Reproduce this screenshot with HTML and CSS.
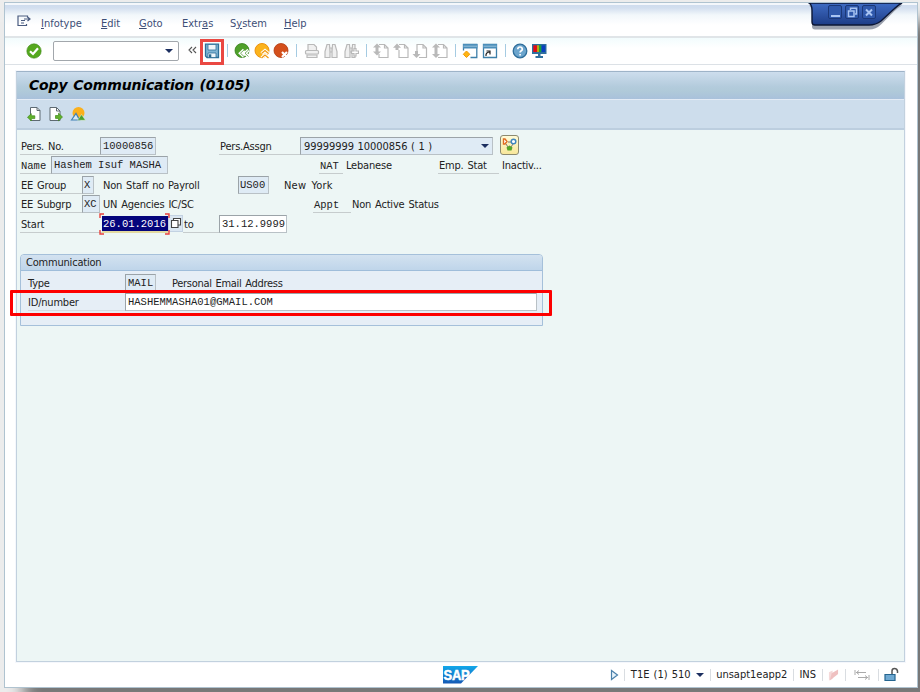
FILE: index.html
```
<!DOCTYPE html>
<html lang="en">
<head>
  <meta charset="UTF-8">
  <meta name="viewport" content="width=device-width, initial-scale=1.0">
  <title>Copy Communication (0105)</title>
  <link rel="stylesheet" href="styles.css">
</head>
<body>
  <div class="window">

    <!-- Window buttons -->
    <svg class="window-buttons" width="96" height="28" viewBox="0 0 96 28">
      <defs>
        <linearGradient id="tab" x1="0" y1="0" x2="0" y2="1">
          <stop offset="0" stop-color="#3f6cc4"/>
          <stop offset="1" stop-color="#1d3c86"/>
        </linearGradient>
      </defs>
      <path d="M2 1Q5 3 5 8V22Q5 25 8 25H62Q69 25 74 20L87 7Q91 3 95 1" fill="#9aa0ac" transform="translate(0 1.5)"/>
      <path d="M2 0Q5 2 5 7V19Q5 22 8 22H62Q69 22 74 18L87 6Q91 2 95 0Z" fill="url(#tab)" stroke="#0c1736" stroke-width="1.4"/>
      <g fill="#2f58ab" stroke="#1b3878">
        <rect x="21.500" y="2.500" width="13" height="13" rx="1.500"/>
        <rect x="38.500" y="2.500" width="13" height="13" rx="1.500"/>
        <rect x="55.500" y="2.500" width="13" height="13" rx="1.500"/>
      </g>
      <g fill="none" stroke="#a9c4f2" stroke-width="1.500">
        <path d="M24 13H33" stroke-width="2"/>
        <path d="M43.500 7V5.300H49.500V11H48"/>
        <path d="M41.500 8H47V13.500H41.500Z"/>
        <path d="M59 6.500L65 12.500M65 6.500L59 12.500" stroke-width="2"/>
      </g>
    </svg>

    <!-- Menu bar -->
    <div class="menu-bar">
      <svg class="menu-icon" width="14" height="12" viewBox="0 0 14 12" fill="none" stroke="#4a5c80" stroke-width="1.200">
        <path d="M10.500 2.500V1H1V10.500H9.500V9"/>
        <path d="M4 5.500H8M4 8H7"/>
        <path d="M7 4H13M10.500 2L13 4L10.500 6"/>
      </svg>
      <span class="menu-item"><u>I</u>nfotype</span>
      <span class="menu-item"><u>E</u>dit</span>
      <span class="menu-item"><u>G</u>oto</span>
      <span class="menu-item">Extr<u>a</u>s</span>
      <span class="menu-item">S<u>y</u>stem</span>
      <span class="menu-item"><u>H</u>elp</span>
    </div>

    <!-- Standard toolbar -->
    <div class="toolbar">
      <svg class="icon" viewBox="0 0 16 16">
        <circle cx="8" cy="8" r="7.200" fill="#55a81e" stroke="#3f8a1a" stroke-width=".6"/>
        <path d="M4 8.200L7 11L12 5.300" fill="none" stroke="#fff" stroke-width="2.200"/>
      </svg>
      <div class="command"><span class="arrow"></span></div>
      <svg class="collapse" viewBox="0 0 10 16" fill="none" stroke="#555" stroke-width="1.100">
        <path d="M5 4L2 7L5 10M9 4L6 7L9 10"/>
      </svg>
      <div class="save">
        <svg class="icon" viewBox="0 0 16 16">
          <path d="M1.500 1.200H14.500V14.500H3L1.500 13Z" fill="#7fb4d3" stroke="#2d7099" stroke-width="1.300"/>
          <path d="M4 1.500H12V7H4Z" fill="#eef6fa" stroke="#2d7099" stroke-width=".8"/>
          <path d="M4 10H12V14.500H4Z" fill="#eef6fa" stroke="#2d7099" stroke-width=".8"/>
          <path d="M5 11.300H7.300V14.500H5Z" fill="#28698f"/>
        </svg>
      </div>
      <span class="sep"></span>
      <div class="icon-group">
        <svg class="icon" viewBox="0 0 16 16">
          <circle cx="8" cy="7.500" r="7" fill="#4fa02a" stroke="#35801c" stroke-width=".8"/>
          <path d="M10 7L6.500 10.200L10 13.500M14.500 7L11 10.200L14.500 13.500" fill="none" stroke="#fff" stroke-width="3.200"/>
          <path d="M10 7L6.500 10.200L10 13.500M14.500 7L11 10.200L14.500 13.500" fill="none" stroke="#3f8f22" stroke-width=".7"/>
        </svg>
        <svg class="icon" viewBox="0 0 16 16">
          <circle cx="8" cy="7.500" r="7" fill="#fbb31c" stroke="#ec920f" stroke-width="1"/>
          <path d="M7.500 10.500L11 7.500L14.500 10.500M7.500 15L11 12L14.500 15" fill="none" stroke="#fff" stroke-width="3.200"/>
          <path d="M7.500 10.500L11 7.500L14.500 10.500M7.500 15L11 12L14.500 15" fill="none" stroke="#f29a12" stroke-width="1.300"/>
        </svg>
        <svg class="icon" viewBox="0 0 16 16">
          <circle cx="8" cy="7.500" r="7" fill="#d4501c" stroke="#b03a10" stroke-width=".8"/>
          <path d="M9 9L14 14M14 9L9 14" stroke="#fff" stroke-width="2.200"/>
        </svg>
      </div>
      <span class="sep"></span>
      <div class="icon-group disabled">
        <svg class="icon" viewBox="0 0 16 16">
          <path d="M4 7V1.500H10L12.500 4V7"/>
          <rect x="1.500" y="7.500" width="13" height="3.500" rx="1"/>
          <path d="M3 12H13V14.500H3Z"/>
        </svg>
        <svg class="icon" viewBox="0 0 16 16">
          <path d="M4 1.500H6.500L7 9V14.500H2V8.500ZM12 1.500H9.500L9 9V14.500H14V8.500ZM7 5H9V9H7"/>
        </svg>
        <svg class="icon" viewBox="0 0 16 16">
          <path d="M4 1.500H6.500L7 9V14.500H2V8.500ZM12 1.500H9.500L9 9V14.500H12V8ZM7 5H9V9H7"/>
          <path d="M11 5.500H13V8H15.500V10.500H13V13H11V10.500H8.500V8H11Z" fill="#fff"/>
        </svg>
      </div>
      <span class="sep"></span>
      <div class="icon-group disabled">
        <svg class="icon" viewBox="0 0 16 16">
          <path d="M6 1.500H11.500L15 5V14.500H6V11M11.500 1.500V5H15" fill="#fff"/>
          <path d="M4 .5L8 4.500H5.500V8.500H8L4 12.500L0 8.500H2.500V4.500H0Z" class="solid"/>
        </svg>
        <svg class="icon" viewBox="0 0 16 16">
          <path d="M6 1.500H11.500L15 5V14.500H6V7M11.500 1.500V5H15" fill="#fff"/>
          <path d="M4 .5L8 4.800H5.500V7H2.500V4.800H0Z" class="solid"/>
        </svg>
        <svg class="icon" viewBox="0 0 16 16">
          <path d="M5 8V1.500H11L14.500 5V14.500H7M11 1.500V5H14.500" fill="#fff"/>
          <path d="M4.500 15L8.500 11H6V8H3V11H.5Z" class="solid"/>
        </svg>
        <svg class="icon" viewBox="0 0 16 16">
          <path d="M6 1.500H11.500L15 5V14.500H6M11.500 1.500V5H15" fill="#fff"/>
          <path d="M4 .5L8 4.500H5.500V11H8L4 15L0 11H2.500V4.500H0Z" class="solid"/>
        </svg>
      </div>
      <span class="sep"></span>
      <div class="icon-group">
        <svg class="icon" viewBox="0 0 16 16">
          <path d="M1.500 1.500H14.800V14.500H1.500Z" fill="#fff" stroke="#3d7fa9" stroke-width="1.300"/>
          <path d="M1 1H15.500V5.500H1Z" fill="#4c8fba"/>
          <path d="M1.500 3.200H15" stroke="#a9cfe4" stroke-width=".8"/>
          <path d="M0 7.500H8.500V16H0Z" fill="#fff"/>
          <path d="M4.500 8L7.800 11.300L4.500 14.500L1.300 11.300Z" fill="#fdb515" stroke="#f59b05"/>
        </svg>
        <svg class="icon" viewBox="0 0 16 16">
          <path d="M1.500 1.500H14.500V14.500H1.500Z" fill="#fff" stroke="#3d7fa9" stroke-width="1.300"/>
          <path d="M1 1H15V5.500H1Z" fill="#4c8fba"/>
          <path d="M1.500 3.200H14.500" stroke="#a9cfe4" stroke-width=".8"/>
          <path d="M4 13Q3.500 9.500 7.500 9M4.500 8H8V11.500" fill="none" stroke="#222" stroke-width="1.200"/>
        </svg>
      </div>
      <span class="sep"></span>
      <div class="icon-group">
        <svg class="icon" viewBox="0 0 16 16">
          <circle cx="8" cy="8" r="6.800" fill="#6ca5cd" stroke="#2f6e9b" stroke-width="1.300"/>
          <path d="M5.800 6.300Q5.800 4 8 4T10.300 6.200Q10.300 7.300 9 8Q8.100 8.600 8.100 9.600M8.100 11V12.600" fill="none" stroke="#fff" stroke-width="1.700"/>
        </svg>
        <svg class="icon" viewBox="0 0 16 16">
          <path d="M1 1H15.500V11H1Z" fill="#2f6f9d"/>
          <path d="M2.300 2.300H6V9H2.300Z" fill="#e30b17"/>
          <path d="M6 2.300H8V9H6Z" fill="#b8a413"/>
          <path d="M8 2.300H10.500V9H8Z" fill="#18a53c"/>
          <path d="M10.500 2.300H14.200V9H10.500Z" fill="#0b3fc0"/>
          <path d="M7 11H9.500V13H12V15H4.500V13H7Z" fill="#2f6f9d"/>
        </svg>
      </div>
    </div>

    <!-- Screen -->
    <div class="screen">
      <h1 class="title">Copy Communication (0105)</h1>
      <div class="app-toolbar">
        <svg class="icon" viewBox="0 0 16 16">
          <path d="M4.500 1.500H11L14 4.500V14.500H4.500Z" fill="#fff" stroke="#5e6a72"/>
          <path d="M11 1.500V4.500H14" fill="none" stroke="#5e6a72"/>
          <path d="M1.500 11.200L5.300 7.700V9.800H8.800V12.600H5.300V15Z" fill="#62b22b" stroke="#3d8a19" stroke-width=".7"/>
        </svg>
        <svg class="icon" viewBox="0 0 16 16">
          <path d="M2 1.500H8.500L12 5V14.500H2Z" fill="#fff" stroke="#5e6a72"/>
          <path d="M8.500 1.500V5H12" fill="none" stroke="#5e6a72"/>
          <path d="M14.500 11L10.500 7.200V9.500H7.500V12.400H10.500V14.800Z" fill="#62b22b" stroke="#3d8a19" stroke-width=".7"/>
        </svg>
        <svg class="icon" viewBox="0 0 16 16">
          <circle cx="8.500" cy="7" r="6" fill="#fbb01c"/>
          <path d="M1.500 14L6 7.500L9.500 14Z" fill="#d7e7f3" stroke="#3f80b4" stroke-width="1.200"/>
          <path d="M7.500 14.300L11.500 8.500L15.500 14.300Z" fill="#4da12b" stroke="#e8f2e4" stroke-width=".5"/>
        </svg>
      </div>

      <div class="screen-body">
        <!-- Employee header -->
        <div class="row row-pers">
          <span class="label">Pers. No.</span>
          <span class="field">10000856</span>
          <span></span>
          <span class="label">Pers.Assgn</span>
          <span class="field select">99999999 10000856 ( 1 )<i class="arrow"></i></span>
          <span class="assign-btn">
            <svg width="17" height="18" viewBox="0 0 17 18" fill="none">
              <path d="M5 8L7 11M12 8L10 11M7 6H10" stroke="#777"/>
              <path d="M2.500 3H4L6 5.500L4 8H2.500Z" fill="#fff" stroke="#df6b20" stroke-width="1.400"/>
              <circle cx="12.500" cy="5.500" r="2.300" fill="#fff" stroke="#3f87c0" stroke-width="1.500"/>
              <path d="M8.500 9.500L11.500 11.500L10.500 14.500H6.500L5.500 11.500Z" fill="#55a52a"/>
            </svg>
          </span>
        </div>
        <div class="row row-name">
          <span class="label mono">Name</span>
          <span class="field">Hashem Isuf MASHA</span>
          <span></span>
          <span class="label mono">NAT</span>
          <span class="text">Lebanese</span>
          <span class="label">Emp. Stat</span>
          <span class="text">Inactiv...</span>
        </div>
        <div class="row row-group">
          <span class="label">EE Group</span>
          <span class="field">X</span>
          <span class="text">Non Staff no Payroll</span>
          <span class="field">US00</span>
          <span class="text">New York</span>
        </div>
        <div class="row row-subgroup">
          <span class="label">EE Subgrp</span>
          <span class="field">XC</span>
          <span class="text">UN Agencies IC/SC</span>
          <span class="label mono">Appt</span>
          <span class="text">Non Active Status</span>
        </div>
        <div class="row row-start">
          <span class="label">Start</span>
          <span class="date-active">26.01.2016
            <svg class="focus-marks" width="71" height="22" viewBox="0 0 71 22" fill="none" stroke="#e8403c" stroke-width="1.400">
              <path d="M1 5V1H5M66 1H70V5M1 17V21H5M66 21H70V17"/>
            </svg>
          </span>
          <span class="help-btn">
            <svg width="12" height="12" viewBox="0 0 12 12" fill="#fff" stroke="#444" stroke-width="1.100">
              <path d="M3.500 1.500H10.500V8H3.500Z"/>
              <path d="M1.500 3.500H8V10.500H1.500Z"/>
            </svg>
          </span>
          <span class="label">to</span>
          <span class="field editable">31.12.9999</span>
        </div>

        <!-- Communication -->
        <div class="group-box">
          <div class="group-title">Communication</div>
          <div class="group-body">
            <div class="row row-type">
              <span class="text">Type</span>
              <span class="field">MAIL</span>
              <span class="text">Personal Email Address</span>
            </div>
            <div class="row row-id">
              <span class="label">ID/number</span>
              <span class="field editable">HASHEMMASHA01@GMAIL.COM</span>
              <span class="highlight"></span>
            </div>
          </div>
        </div>
      </div>
    </div>

    <!-- Status bar -->
    <div class="status-bar">
      <svg class="logo" width="35" height="18" viewBox="0 0 35 18">
        <defs>
          <linearGradient id="sap" x1="0" y1="0" x2="0" y2="1">
            <stop offset="0" stop-color="#12a8ea"/>
            <stop offset="1" stop-color="#1559b5"/>
          </linearGradient>
        </defs>
        <path d="M0 0H35L18 17.500H0Z" fill="url(#sap)"/>
        <text class="logo-text" x="0.500" y="13.500" textLength="26" lengthAdjust="spacingAndGlyphs">SAP</text>
      </svg>
      <div class="status-fields">
        <svg width="9" height="12" viewBox="0 0 9 12"><path d="M1.500 1.500L7.500 6L1.500 10.500Z" fill="#e6f2fa" stroke="#4b80aa" stroke-width="1.200"/></svg>
        <span class="bar"></span>
        <span class="system">T1E (1) 510</span>
        <span class="arrow"></span>
        <span class="bar"></span>
        <span class="server">unsapt1eapp2</span>
        <span class="bar"></span>
        <span class="mode">INS</span>
        <span class="bar"></span>
        <svg class="rec" width="11" height="14" viewBox="0 0 12 14"><path d="M1 4L5 2V11L1 13Z" fill="#f5d9d9"/><path d="M4 5L11 1V6L2 13Z" fill="#efc0c0"/></svg>
        <span class="bar"></span>
        <svg class="tabs" width="16" height="12" viewBox="0 0 16 12" fill="none" stroke="#aaa"><path d="M1 1V6M15 6V11M2 3.500H12M5 1.500L2.500 3.500L5 5.500M4 8.500H14M11 6.500L13.500 8.500L11 10.500"/></svg>
        <span class="bar"></span>
        <svg class="lock" width="15" height="15" viewBox="0 0 15 15"><path d="M8 7V4Q8 1.500 10.500 1.500T13.500 4V6" fill="none" stroke="#555" stroke-width="1.500"/><path d="M1 7.500H11V13.500H1Z" fill="#6fa9d2" stroke="#25658f" stroke-width="1.200"/></svg>
      </div>
    </div>
  </div>
</body>
</html>
```
FILE: styles.css
```
* {
  box-sizing: border-box;
}
body {
  margin: 0;
  height: 692px;
  overflow: hidden;
  background: #ededed;
  font-family: "DejaVu Sans Condensed", "DejaVu Sans", sans-serif;
  font-stretch: condensed;
  font-size: 11px;
  letter-spacing: -0.2px;
  word-spacing: 1px;
  color: #222;
}
.window {
  position: relative;
  display: flex;
  flex-direction: column;
  width: 914px;
  height: 686px;
  margin: 2px 0 0 4px;
  border: 1px solid #afc3d0;
  background: #fff;
  box-shadow: 20px 20px 16px #777;
}
.window-buttons {
  position: absolute;
  top: 0;
  right: 14px;
}
svg {
  display: block;
  flex: none;
}
.icon {
  width: 16px;
  height: 16px;
}
.arrow {
  width: 0;
  height: 0;
  border: 4px solid transparent;
  border-top: 4px solid #1c2f60;
  border-bottom: 0;
}

/* Menu */
.menu-bar {
  display: grid;
  grid-template-columns: 24px 60px 38px 43px 48px 54px 40px;
  align-items: center;
  height: 35px;
  padding: 5px 0 0 12px;
  border-top: 2px solid #f4f7fb;
  border-bottom: 2px solid #e0e5e8;
  background: linear-gradient(#cfdcee 0, #d3dfef 3px, #f2f7fb 10px, #fff 20px);
  color: #3d4e76;
  letter-spacing: 0;
}
.menu-icon {
  margin-bottom: 4px;
}
.menu-item {
  white-space: nowrap;
}

/* Toolbar */
.toolbar {
  display: flex;
  align-items: center;
  height: 27px;
  padding: 0 0 1px 21px;
  border-bottom: 1px solid #dce1e6;
  background: linear-gradient(#f2fcfd, #fff 10px);
}
.command {
  display: flex;
  align-items: center;
  justify-content: flex-end;
  width: 126px;
  height: 20px;
  margin: 0 8px 0 11px;
  padding-right: 5px;
  border: 1px solid #a2a7ac;
  border-radius: 2px;
  background: #fff;
}
.collapse {
  width: 10px;
  height: 16px;
  margin-right: 7px;
}
.save {
  position: relative;
}
.save::after {
  content: "";
  position: absolute;
  inset: -4px -4px -6px;
  border: 3px solid #ea4842;
}
.sep {
  width: 1px;
  height: 13px;
  margin: 0 6.2px 0 7px;
  background: #a5cbe2;
}
.icon-group {
  display: flex;
  gap: 3.6px;
}
.disabled {
  fill: #f0f0f0;
  stroke: #b9b9b9;
  stroke-width: 1.2;
}
.disabled .solid {
  fill: #b9b9b9;
  stroke: none;
}

/* Screen */
.screen {
  flex: 1;
  display: flex;
  flex-direction: column;
  margin: 6px 12px 0 11px;
  border: 1px solid #c2d1de;
  border-top: 1px solid #9eb3c8;
  outline: 1px solid #f5f7fc;
}
.title {
  height: 27px;
  margin: 0;
  padding-left: 12px;
  background: linear-gradient(#cddded, #b3cbdc 55%, #b0cad9 70%, #a9c1db);
  color: #000;
  font-family: "DejaVu Sans", sans-serif;
  font-stretch: normal;
  font-size: 14px;
  font-style: italic;
  font-weight: bold;
  letter-spacing: -0.15px;
  line-height: 26px;
}
.app-toolbar {
  display: flex;
  align-items: center;
  gap: 6px;
  height: 31px;
  padding-left: 9px;
  border-top: 1px solid #e3ebf5;
  border-bottom: 2px solid #bccedf;
  background: #cdddec;
}
.screen-body {
  flex: 1;
  padding: 5px 0 0 3px;
  background: #edf6f5;
}
.row {
  display: grid;
  align-items: end;
  height: 19.6px;
  white-space: nowrap;
}
.row-pers {
  grid-template-columns: 80px 56px 63px 81px 193px 26px;
}
.row-name {
  grid-template-columns: 31px 117px 151px 24px 95px 61px 60px;
}
.row-group {
  grid-template-columns: 62px 12px 144px 31px 60px;
}
.row-subgroup {
  grid-template-columns: 62px 18px 213px 38px 120px;
}
.row-start {
  grid-template-columns: 82px 66px 15px 36px 68px;
}
.label,
.text {
  height: 18px;
  padding-left: 1px;
  line-height: 20px;
}
.label {
  border-bottom: 1px solid #c6cccd;
}
.field,
.mono,
.date-active {
  font-family: "Liberation Mono", monospace;
  font-size: 10.5px;
  letter-spacing: 0;
  word-spacing: 0;
}
.field {
  height: 18px;
  padding-left: 2px;
  border: 1px solid #b9c1c6;
  border-top-color: #9ba3a8;
  border-left-color: #9ba3a8;
  background: #dfebf5;
  line-height: 17px;
}
.editable {
  background: #fff;
}
.select {
  display: flex;
  align-items: center;
  justify-content: space-between;
  padding: 0 3px;
  font-family: inherit;
  font-size: 11px;
  letter-spacing: -0.05px;
  word-spacing: 0.5px;
}
.assign-btn {
  width: 19px;
  height: 20px;
  margin-left: 7px;
  border: 1px solid #8c8a70;
  border-radius: 3px;
  background: linear-gradient(#fffbd8, #f8e79a);
}
.row-name .label + .text {
  padding-left: 3px;
}
.row-group .text {
  padding-left: 9px;
}
.row-group .field + .text:last-child {
  padding-left: 15px;
  letter-spacing: 0.2px;
  word-spacing: 2px;
}
.row-subgroup .text {
  padding-left: 3px;
}
.row-subgroup .label + .text {
  padding-left: 1px;
}
.row-group .field,
.row-subgroup .field {
  padding-left: 1px;
}
.date-active {
  position: relative;
  height: 17px;
  padding-left: 1px;
  border-bottom: 2px solid #e2d9a0;
  background: #04047c;
  color: #fff;
  line-height: 17px;
}
.focus-marks {
  position: absolute;
  top: -3px;
  left: -3px;
}
.help-btn {
  display: flex;
  align-items: center;
  justify-content: center;
  height: 17px;
  margin-bottom: 1px;
  border: 1px solid #c3d2e2;
  background: #dbe7f2;
}

/* Group box */
.group-box {
  width: 523px;
  height: 72px;
  margin-top: 21px;
  border: 1px solid #a5c0da;
  border-radius: 4px 4px 0 0;
  background: #e6eef6;
}
.group-title {
  height: 16px;
  padding-left: 5px;
  border-bottom: 1px solid #9fbdda;
  border-radius: 3px 3px 0 0;
  background: linear-gradient(#d3e2f0, #bfd5ea);
  line-height: 15px;
}
.group-body {
  padding: 1px 0 0 7px;
}
.row-type {
  grid-template-columns: 97px 31px 150px;
}
.row-type .text {
  padding-left: 0;
}
.row-type .text:last-child {
  padding-left: 16px;
  letter-spacing: -0.3px;
}
.row-id {
  position: relative;
  grid-template-columns: 97px 412px;
}
.row-id .label {
  padding-left: 0;
  border-color: #d3dbe2;
}
.highlight {
  position: absolute;
  top: -2px;
  left: -18px;
  width: 542px;
  height: 26px;
  border: 3px solid #fd0000;
  border-radius: 1px;
}

/* Status bar */
.status-bar {
  display: flex;
  align-items: center;
  justify-content: space-between;
  height: 25px;
  padding: 0 18px 0 438px;
}
.logo-text {
  fill: #fff;
  stroke: #fff;
  stroke-width: 0.5px;
  font: bold 14px "Liberation Sans", sans-serif;
}
.status-fields {
  display: flex;
  align-items: center;
  gap: 5.5px;
  letter-spacing: 0;
  white-space: nowrap;
}
.bar {
  width: 1px;
  height: 12px;
  background: #d9dde1;
}
.tabs {
  margin: 0 2px 0 3px;
}
```
